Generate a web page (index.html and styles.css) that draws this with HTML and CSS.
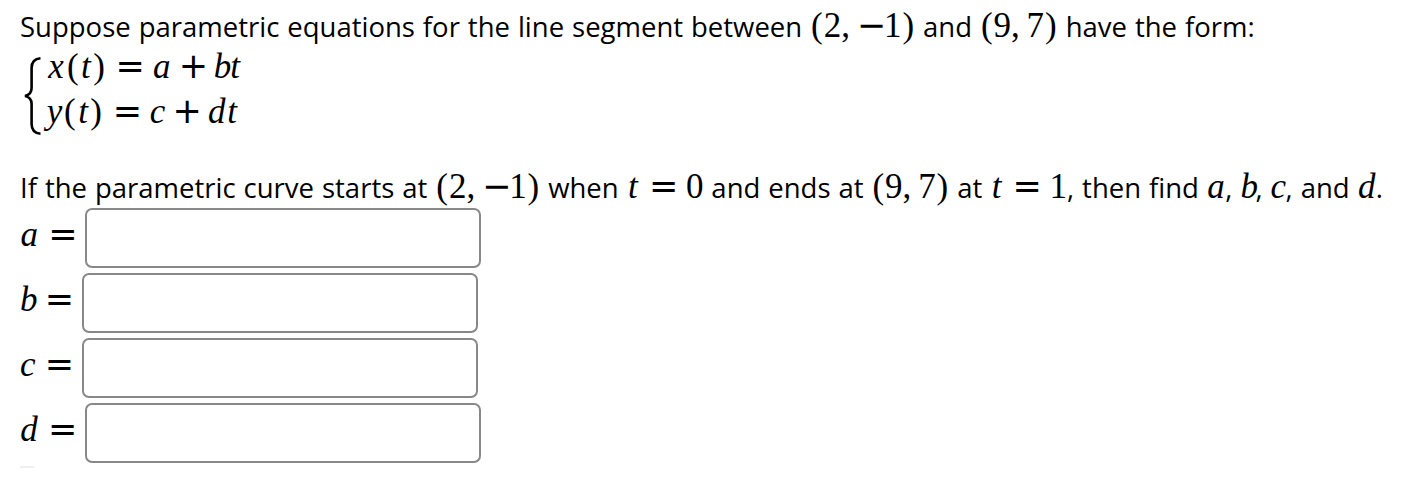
FILE: index.html
```html
<!DOCTYPE html>
<html>
<head>
<meta charset="utf-8">
<link rel="stylesheet" href="styles.css">
</head>
<body>
<div class="page">
  <p class="line first">Suppose parametric equations for the line segment between <span class="m"><span class="g wp">(</span><span class="g wn">2</span><span class="g wc">,</span><span class="th"></span><span class="g wo">−</span><span class="g wn">1</span><span class="g wp">)</span></span> and <span class="m"><span class="g wp">(</span><span class="g wn">9</span><span class="g wc">,</span><span class="th"></span><span class="g wn">7</span><span class="g wp">)</span></span> have the form:</p>
  <div class="cases m">
    <svg class="brace" width="19" height="78" viewBox="0 0 19 78">
      <path d="M17.5 1.3 C11.5 1.8 8.6 5 8.6 11 L8.6 31 C8.6 35.5 6.6 38 2 39 C6.6 40 8.6 42.5 8.6 47 L8.6 67 C8.6 73 11.5 76.2 17.5 76.7" fill="none" stroke="#000" stroke-width="2.6"/>
    </svg>
    <div class="rows">
      <div class="eq"><span class="g i vx">x</span><span class="g wp">(</span><span class="g i vt">t</span><span class="g wp">)</span><span class="g wo rel">=</span><span class="g i va">a</span><span class="g wo bin">+</span><span class="g i vb">b</span><span class="g i vt">t</span></div>
      <div class="eq"><span class="g i vy">y</span><span class="g wp">(</span><span class="g i vt">t</span><span class="g wp">)</span><span class="g wo rel">=</span><span class="g i vc">c</span><span class="g wo bin">+</span><span class="g i vd">d</span><span class="g i vt">t</span></div>
    </div>
  </div>
  <p class="line second">If the parametric curve starts at <span class="m"><span class="g wp">(</span><span class="g wn">2</span><span class="g wc">,</span><span class="th"></span><span class="g wo">−</span><span class="g wn">1</span><span class="g wp">)</span></span> when <span class="m"><span class="g i vt">t</span><span class="g wo rel">=</span><span class="g wn">0</span></span> and ends at <span class="m"><span class="g wp">(</span><span class="g wn">9</span><span class="g wc">,</span><span class="th"></span><span class="g wn">7</span><span class="g wp">)</span></span> at <span class="m"><span class="g i vt">t</span><span class="g wo rel">=</span><span class="g wn">1</span></span>, then find <span class="m"><span class="g i va">a</span></span>, <span class="m"><span class="g i vb">b</span></span>, <span class="m"><span class="g i vc">c</span></span>, and <span class="m"><span class="g i vd">d</span></span>.</p>
  <div class="answers">
    <div class="ans"><span class="m lbl"><span class="g i va">a</span><span class="g wo rel">=</span></span><span class="box"></span></div>
    <div class="ans"><span class="m lbl"><span class="g i vb">b</span><span class="g wo rel">=</span></span><span class="box"></span></div>
    <div class="ans"><span class="m lbl"><span class="g i vc">c</span><span class="g wo rel">=</span></span><span class="box"></span></div>
    <div class="ans"><span class="m lbl"><span class="g i vd">d</span><span class="g wo rel">=</span></span><span class="box"></span></div>
  </div>
  <div class="faint"></div>
</div>
</body>
</html>
```
FILE: styles.css
```css
html, body {
  margin: 0;
  background: #fff;
}
body {
  font-family: "Open Sans", "Noto Sans", sans-serif;
  font-size: 27.5px;
  color: #000;
}
.page {
  padding: 7px 0 0 20px;
}
.line {
  margin: 0;
  line-height: 36px;
  white-space: nowrap;
  word-spacing: 0.8px;
}
.m {
  font-family: "Liberation Serif", "DejaVu Serif", serif;
  font-size: 35px;
  line-height: 36px;
  word-spacing: 0;
}
.i { font-style: italic; }
.g {
  display: inline-block;
  text-align: center;
}
.wp { width: 0.389em; }
.wn { width: 0.5em; }
.wc { width: 0.278em; text-align: left; }
.wo {
  width: 0.778em;
  font-family: "DejaVu Sans", sans-serif;
  font-size: 1em;
}
.va { width: 0.529em; }
.vb { width: 0.429em; }
.vc { width: 0.433em; }
.vd { width: 0.52em; }
.vx { width: 0.572em; }
.vy { width: 0.49em; }
.vt { width: 0.361em; }
.th { display: inline-block; width: 0.1667em; }
.rel { margin: 0 0.2778em; }
.bin { margin: 0 0.2222em; }
.cases {
  display: flex;
  align-items: flex-start;
  margin-left: 3px;
  margin-top: -2px;
}
.brace {
  display: block;
  margin-top: 14px;
  margin-right: 4px;
}
.rows {
  display: flex;
  flex-direction: column;
  gap: 8px;
  margin-top: 5px;
}
.eq {
  line-height: 36px;
  white-space: nowrap;
}
.second {
  margin-top: 33px;
}
.answers {
  display: flex;
  flex-direction: column;
  gap: 5px;
  margin-top: 2px;
}
.ans {
  display: flex;
  align-items: flex-start;
}
.lbl {
  margin-top: 8px;
  white-space: nowrap;
}
.box {
  display: block;
  box-sizing: border-box;
  width: 396px;
  height: 60px;
  border: 2px solid #888;
  border-radius: 7px;
}
.faint {
  width: 14px;
  height: 2px;
  background: #efefef;
  margin-top: 3px;
}
```
